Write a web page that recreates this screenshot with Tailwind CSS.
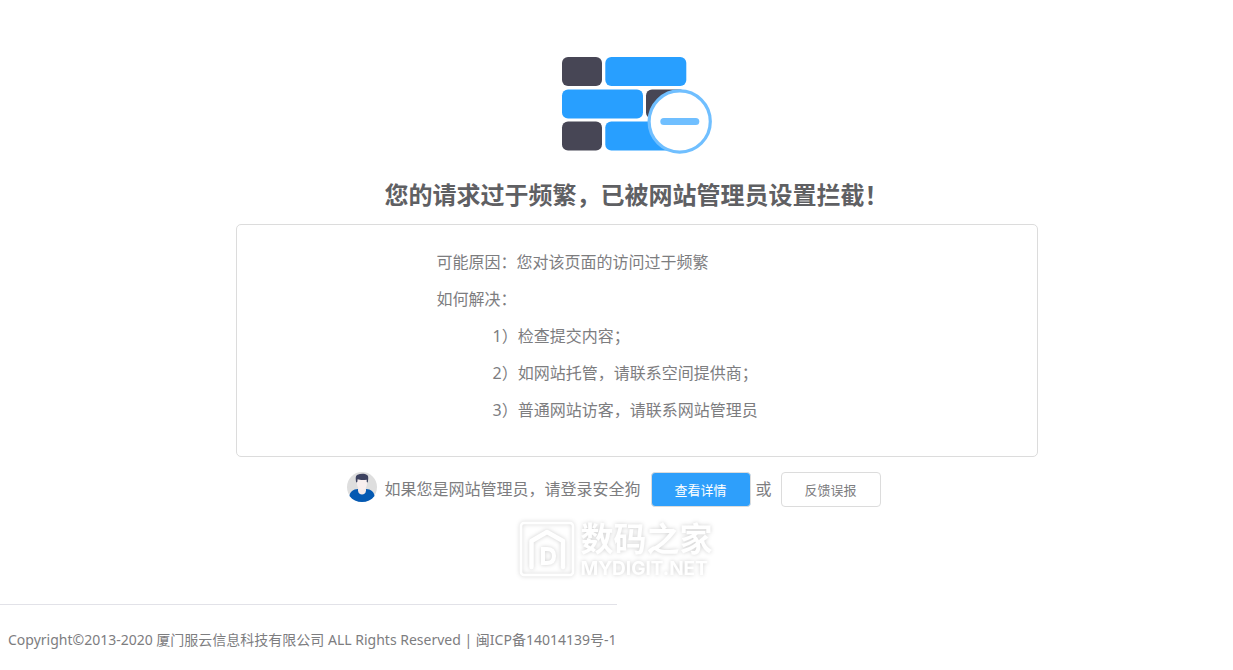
<!DOCTYPE html>
<html lang="zh-CN">
<head>
    <meta charset="UTF-8">
    <meta name="viewport" content="width=device-width, initial-scale=1.0">
    <title>网站访问提示</title>
    <script src="https://cdn.jsdelivr.net/npm/@tailwindcss/browser@4"></script>
</head>
<body class="bg-white overflow-x-hidden text-[#7d7d7f] font-['Noto_Sans','Noto_Sans_CJK_SC',sans-serif]">
    <main class="flex flex-col items-center pt-14">
        <!-- Aviso principal -->
        <section class="w-full pl-10 flex flex-col items-center">
            <svg class="w-[151px] h-[98px]" viewBox="0 0 151 98" aria-hidden="true">
                <g fill="#474655">
                    <rect x="1" y="1" width="40" height="29" rx="6"/>
                    <rect x="85" y="33.5" width="40" height="29" rx="6"/>
                    <rect x="1" y="65.5" width="40" height="29" rx="6"/>
                </g>
                <g fill="#289fff">
                    <rect x="44.3" y="1" width="81" height="29" rx="6"/>
                    <rect x="1" y="33.5" width="81" height="29" rx="6"/>
                    <rect x="44.3" y="65.5" width="81" height="29" rx="6"/>
                </g>
                <circle cx="118.7" cy="65.5" r="30.6" fill="#fff" stroke="#70bfff" stroke-width="3.2"/>
                <rect x="99.3" y="62" width="39" height="7" rx="3.5" fill="#70bfff"/>
            </svg>
            <h1 class="mt-5 text-2xl leading-10 font-bold text-[#5f6063] font-['Noto_Sans_CJK_SC',sans-serif]">您的请求过于频繁，已被网站管理员设置拦截！</h1>
            <div class="mt-2.5 w-full max-w-[802px] border border-[#dcdcdc] rounded-[5px] pt-[19px] pb-[27px] pl-[200px] text-base leading-[37px]">
                <p>可能原因：您对该页面的访问过于频繁</p>
                <p>如何解决：</p>
                <ul class="pl-14">
                    <li>1）检查提交内容；</li>
                    <li>2）如网站托管，请联系空间提供商；</li>
                    <li>3）普通网站访客，请联系网站管理员</li>
                </ul>
            </div>
        </section>

        <div class="mt-[15px] pr-[5px] flex items-start text-base leading-[35px]">
            <svg class="w-[30px] h-[30px] mr-[7px]" viewBox="0 0 30 30" aria-hidden="true">
                <circle cx="15" cy="15" r="15" fill="#dedede"/>
                <path d="M2.5 24C3 19.5 6 17.3 11 17L15 21L19 17C24 17.3 27 19.5 27.5 24C24.5 28 20 30 15 30C10 30 5.5 28 2.5 24Z" fill="#0459b2"/>
                <path d="M11 15H19V18.5C19 21 17 22.5 15 22.5C13 22.5 11 21 11 18.5Z" fill="#f3e9e9"/>
                <path d="M10 7H20V11C20 15 18 18 15 18C12 18 10 15 10 11Z" fill="#f8efef"/>
                <path d="M9.2 10.5C8.5 6 8.500 3.5 10.5 2.7C14 1.500 18 1.6 20 3C21.8 4 21.3 7 20.8 10.5L19.7 10V7.7C17 8.3 13 8.3 10.6 7.3L10.3 10Z" fill="#3d4260"/>
            </svg>
            <span>如果您是网站管理员，请登录安全狗</span>
            <button type="button" class="ml-2.5 w-25 h-[35px] rounded-[4px] border border-[#dcdcdc] bg-[#2e9ffb] text-white text-[13px]">查看详情</button>
            <span class="mx-[5px]">或</span>
            <button type="button" class="ml-1 w-25 h-[35px] rounded-[4px] border border-[#dcdcdc] bg-white text-[13px]">反馈误报</button>
        </div>

        <!-- Marca de agua -->
        <div class="mt-[13px] pr-0.5 flex gap-1.5 text-white drop-shadow-[0_0_2px_rgba(0,0,0,0.19)]">
            <svg class="w-14 h-14 mt-px" viewBox="0 0 56 56" fill="none" stroke="currentColor" aria-hidden="true">
                <rect x="2" y="2" width="52" height="52" rx="3" stroke-width="2.5"/>
                <path d="M12.5 46V20L28 11L44 20V46" stroke-width="4.5" stroke-linecap="round" stroke-linejoin="round"/>
                <path d="M24 28V42H28C32.5 42 35 39.5 35 35C35 30.5 32.5 28 28 28Z" stroke-width="4"/>
            </svg>
            <div class="whitespace-nowrap">
                <p class="text-[33px] leading-[34px] font-bold font-['Noto_Sans_CJK_SC',sans-serif]">数码之家</p>
                <p class="text-[19px] leading-[29px] font-bold font-['Inter',sans-serif]">MYDIGIT.NET</p>
            </div>
        </div>
    </main>

    <footer class="mt-[21px] w-1/2 border-t border-[#e2e2e8] pt-[23px] flex justify-end text-sm leading-6 whitespace-nowrap">
        <p>Copyright©2013-2020 厦门服云信息科技有限公司 ALL Rights Reserved | 闽ICP备14014139号-1</p>
    </footer>
</body>
</html>
